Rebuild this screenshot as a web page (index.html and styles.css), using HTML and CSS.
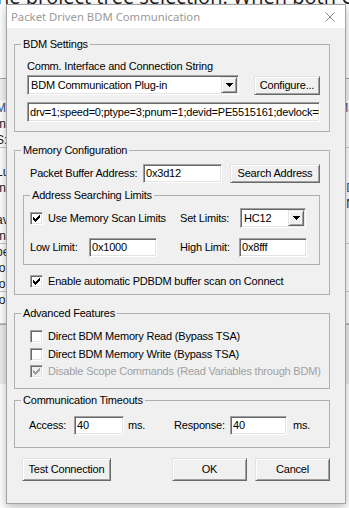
FILE: index.html
```html
<!DOCTYPE html>
<html>
<head>
<meta charset="utf-8">
<title>Packet Driven BDM Communication</title>
<link rel="stylesheet" href="styles.css">
</head>
<body>
<div class="desk">
  <div class="bg-head">ine project tree selection. When both Context</div>
  <div class="bg-pane">
    <div class="bg-band"></div>
    <div class="bg-row blue"><span class="l">MA</span><span class="r">Ma</span></div>
    <div class="bg-row"><span class="l">In</span><span class="r"></span></div>
    <div class="bg-row line"><span class="l">S:</span><span class="r"></span></div>
    <div class="bg-row"><span class="l"></span><span class="r">l</span></div>
    <div class="bg-row"><span class="l">Lu</span><span class="r"></span></div>
    <div class="bg-row"><span class="l">In</span><span class="r blue">ID</span></div>
    <div class="bg-row"><span class="l"></span><span class="r">IN</span></div>
    <div class="bg-row"><span class="l">av</span><span class="r orange">J</span></div>
    <div class="bg-row line"><span class="l">In</span><span class="r"></span></div>
    <div class="bg-row"><span class="l">pe</span><span class="r"></span></div>
    <div class="bg-row"><span class="l">lo</span><span class="r"></span></div>
    <div class="bg-row line"><span class="l">lo</span><span class="r">r</span></div>
    <div class="bg-row"><span class="l">lo</span><span class="r"></span></div>
    <div class="bg-row line"><span class="l"></span><span class="r"></span></div>
    <div class="bg-gray"></div>
  </div>
</div>

<div class="dialog">
  <div class="titlebar">
    <span class="title">Packet Driven BDM Communication</span>
    <svg class="close" width="10" height="10" viewBox="0 0 10 10"><path d="M0.5 0.5 L9.5 9.5 M9.5 0.5 L0.5 9.5" stroke="#8a8a8a" stroke-width="1" fill="none"/></svg>
  </div>
  <div class="dlg-body">
    <fieldset class="grp">
      <legend>BDM Settings</legend>
      <div class="grp-body bdm-body">
        <div class="lbl">Comm. Interface and Connection String</div>
        <div class="combo-row">
          <div class="combo combo-wide">
            <span class="combo-text">BDM Communication Plug-in</span>
            <span class="combo-btn"><svg width="7" height="4" viewBox="0 0 7 4" shape-rendering="crispEdges"><path d="M0 0h7v1h-7z M1 1h5v1h-5z M2 2h3v1h-3z M3 3h1v1h-1z" fill="#000"/></svg></span>
          </div>
          <button class="btn btn-config">Configure...</button>
        </div>
        <div class="edit edit-conn">drv=1;speed=0;ptype=3;pnum=1;devid=PE5515161;devlock=0</div>
      </div>
    </fieldset>

    <fieldset class="grp grp-mem">
      <legend>Memory Configuration</legend>
      <div class="grp-body mem-body">
        <div class="mem-row">
          <span class="lbl lbl-pba">Packet Buffer Address:</span>
          <div class="edit edit-pba">0x3d12</div>
          <button class="btn btn-search">Search Address</button>
        </div>
        <fieldset class="grp grp-addr">
          <legend>Address Searching Limits</legend>
          <div class="grp-body addr-body">
            <div class="cb-row">
              <span class="cb"><svg width="11" height="11" viewBox="1 1 11 11" shape-rendering="crispEdges"><path d="M3 5h1v3h-1z M4 6h1v3h-1z M5 7h1v3h-1z M6 6h1v3h-1z M7 5h1v3h-1z M8 4h1v3h-1z M9 3h1v3h-1z" fill="#000"/></svg></span>
              <span>Use Memory Scan Limits</span>
            </div>
            <span class="lbl">Set Limits:</span>
            <div class="combo combo-hc">
              <span class="combo-text">HC12</span>
              <span class="combo-btn"><svg width="7" height="4" viewBox="0 0 7 4" shape-rendering="crispEdges"><path d="M0 0h7v1h-7z M1 1h5v1h-5z M2 2h3v1h-3z M3 3h1v1h-1z" fill="#000"/></svg></span>
            </div>
            <div class="lim-cell">
              <span class="lbl lbl-lim">Low Limit:</span>
              <div class="edit edit-lim">0x1000</div>
            </div>
            <span class="lbl">High Limit:</span>
            <div class="edit edit-lim">0x8fff</div>
          </div>
        </fieldset>
        <div class="cb-row enable-row">
          <span class="cb"><svg width="11" height="11" viewBox="1 1 11 11" shape-rendering="crispEdges"><path d="M3 5h1v3h-1z M4 6h1v3h-1z M5 7h1v3h-1z M6 6h1v3h-1z M7 5h1v3h-1z M8 4h1v3h-1z M9 3h1v3h-1z" fill="#000"/></svg></span>
          <span>Enable automatic PDBDM buffer scan on Connect</span>
        </div>
      </div>
    </fieldset>

    <fieldset class="grp grp-adv">
      <legend>Advanced Features</legend>
      <div class="grp-body adv-body">
        <div class="cb-row adv-row first">
          <span class="cb"></span>
          <span>Direct BDM Memory Read (Bypass TSA)</span>
        </div>
        <div class="cb-row adv-row">
          <span class="cb"></span>
          <span>Direct BDM Memory Write (Bypass TSA)</span>
        </div>
        <div class="cb-row adv-row disabled">
          <span class="cb"><svg width="11" height="11" viewBox="1 1 11 11" shape-rendering="crispEdges"><path d="M3 5h1v3h-1z M4 6h1v3h-1z M5 7h1v3h-1z M6 6h1v3h-1z M7 5h1v3h-1z M8 4h1v3h-1z M9 3h1v3h-1z" fill="#a0a0a0"/></svg></span>
          <span>Disable Scope Commands (Read Variables through BDM)</span>
        </div>
      </div>
    </fieldset>

    <fieldset class="grp grp-time">
      <legend>Communication Timeouts</legend>
      <div class="grp-body time-body">
        <span class="lbl lbl-acc">Access:</span>
        <div class="edit edit-acc">40</div>
        <span class="lbl ms ms-1">ms.</span>
        <span class="lbl lbl-resp">Response:</span>
        <div class="edit edit-resp">40</div>
        <span class="lbl ms ms-2">ms.</span>
      </div>
    </fieldset>

    <div class="btn-row">
      <button class="btn btn-test">Test Connection</button>
      <button class="btn btn-ok">OK</button>
      <button class="btn btn-cancel">Cancel</button>
    </div>
  </div>
</div>
</body>
</html>
```
FILE: styles.css
```css
* { box-sizing: border-box; }
html, body { margin: 0; padding: 0; }
body {
  width: 349px;
  height: 508px;
  overflow: hidden;
  position: relative;
  background: #fff;
  font-family: "Liberation Sans", Arial, sans-serif;
}

/* ---------- background window (mostly hidden) ---------- */
.desk { height: 508px; overflow: hidden; }
.bg-head {
  font: 20px/24px "Open Sans", "Liberation Sans", sans-serif;
  color: #1b1b1b;
  white-space: nowrap;
  margin-top: -15px;
  margin-left: -8px;
}
.bg-pane { margin-top: 69px; }
.bg-band {
  height: 22px;
  border-top: 1px solid #a8a8a8;
  background: #f3f3f3;
}
.bg-row {
  height: 16px;
  display: flex;
  justify-content: space-between;
  font: 12px/16px "Liberation Sans", Arial, sans-serif;
  color: #222;
  white-space: nowrap;
  overflow: hidden;
}
.bg-row.line { border-bottom: 1px solid #c8c8c8; }
.bg-row .l { margin-left: -4px; }
.bg-row .r { margin-right: -6px; }
.blue { color: #2d4f8e; }
.orange { color: #c98a1a; }
.bg-gray { height: 60px; background: #ececec; border-top: 1px solid #b0b0b0; }

/* ---------- dialog ---------- */
.dialog {
  position: absolute;
  left: 6px;
  top: 4px;
  width: 340px;
  height: 500px;
  background: #f0f0f0;
  border: 1px solid #a3a3a3;
  box-shadow: 0 3px 9px rgba(0, 0, 0, 0.28);
  font: 11px/13px "Liberation Sans", Arial, sans-serif;
  letter-spacing: -0.2px;
  color: #000;
}
.titlebar {
  height: 23px;
  background: #fff;
  display: flex;
  align-items: center;
  justify-content: space-between;
  padding: 0 10px 0 4px;
}
.title {
  font: 11.3px/16px "Noto Sans", "Open Sans", sans-serif;
  letter-spacing: 0;
  color: #9a9a9a;
}
.close { display: block; }

.dlg-body { padding: 10px 0 0 7px; }

.grp {
  margin: 0;
  padding: 0;
  min-width: 0;
  width: 316px;
  border: 1px solid #b0b0b0;
}
.grp legend {
  margin-left: 6px;
  padding: 0 2px;
  line-height: 13px;
}
.grp-mem, .grp-adv { margin-top: 12px; }
.grp-time { margin-top: 5px; }

/* controls */
.edit {
  background: #fff;
  border: 1px solid;
  border-color: #a0a0a0 #fff #fff #a0a0a0;
  box-shadow: inset 1px 1px #696969, inset -1px -1px #e3e3e3;
  height: 19px;
  padding: 0 2px;
  line-height: 17px;
  white-space: nowrap;
  overflow: hidden;
}
.combo {
  display: flex;
  align-items: center;
  height: 20px;
  background: #fff;
  border: 1px solid;
  border-color: #a0a0a0 #fff #fff #a0a0a0;
  box-shadow: inset 1px 1px #696969, inset -1px -1px #e3e3e3;
  padding: 1px 1px 1px 2px;
}
.combo-text { flex: 1; padding-left: 1px; white-space: nowrap; overflow: hidden; }
.combo-btn {
  width: 16px;
  height: 16px;
  display: flex;
  align-items: center;
  justify-content: center;
  background: #f0f0f0;
  border: 1px solid;
  border-color: #e3e3e3 #696969 #696969 #e3e3e3;
  box-shadow: inset 1px 1px #fff, inset -1px -1px #a0a0a0;
}
.combo-btn svg { display: block; }
.btn {
  font: inherit;
  letter-spacing: inherit;
  color: #000;
  background: #f0f0f0;
  border: 1px solid;
  border-color: #e3e3e3 #696969 #696969 #e3e3e3;
  box-shadow: inset 1px 1px #fff, inset -1px -1px #a0a0a0;
  padding: 0;
  border-radius: 0;
  height: 19px;
}
.cb {
  flex: none;
  width: 13px;
  height: 13px;
  background: #fff;
  border: 1px solid;
  border-color: #a0a0a0 #fff #fff #a0a0a0;
  box-shadow: inset 1px 1px #696969, inset -1px -1px #e3e3e3;
}
.cb svg { display: block; }
.cb-row { display: flex; align-items: center; gap: 5px; white-space: nowrap; }
.lbl { white-space: nowrap; }

/* BDM settings */
.bdm-body { padding: 9px 9px 9px 12px; }
.combo-row { display: flex; align-items: center; margin-top: 2px; }
.combo-wide { width: 212px; }
.btn-config { width: 66px; margin-left: 15px; }
.edit-conn { width: 293px; height: 20px; line-height: 18px; margin-top: 7px; }

/* Memory configuration */
.mem-body { padding: 7px 0 6px 8px; }
.mem-row { display: flex; align-items: center; margin-left: 7px; }
.lbl-pba { width: 113px; }
.edit-pba { width: 79px; }
.btn-search { width: 90px; margin-left: 8px; }
.grp-addr { width: 297px; margin-top: 6px; }
.addr-body {
  padding: 6px 0 7px 6px;
  display: grid;
  grid-template-columns: 150px 59px 68px;
  row-gap: 10px;
  align-items: center;
}
.combo-hc { width: 66px; margin-left: 1px; }
.lim-cell { display: flex; align-items: center; }
.lbl-lim { width: 59px; }
.edit-lim { width: 68px; }
.enable-row { margin: 10px 0 0 7px; }

/* Advanced features */
.adv-body { padding: 8px 0 8px 15px; }
.adv-row { height: 17px; }
.adv-row.first { margin-bottom: 1px; }
.disabled { color: #a0a0a0; }
.disabled .cb { background: #f0f0f0; }

/* Timeouts */
.time-body { display: flex; align-items: center; padding: 9px 0 12px 14px; }
.lbl-acc { width: 45px; }
.edit-acc { width: 50px; }
.ms { width: 17px; }
.ms-1 { margin-left: 4px; }
.lbl-resp { width: 56px; margin-left: 29px; }
.edit-resp { width: 57px; }
.ms-2 { margin-left: 6px; }

/* Bottom buttons */
.btn-row { display: flex; margin-top: 10px; padding-left: 8px; }
.btn-row .btn { height: 23px; }
.btn-test { width: 89px; }
.btn-ok { width: 75px; margin-left: 61px; }
.btn-cancel { width: 75px; margin-left: 8px; }
```
